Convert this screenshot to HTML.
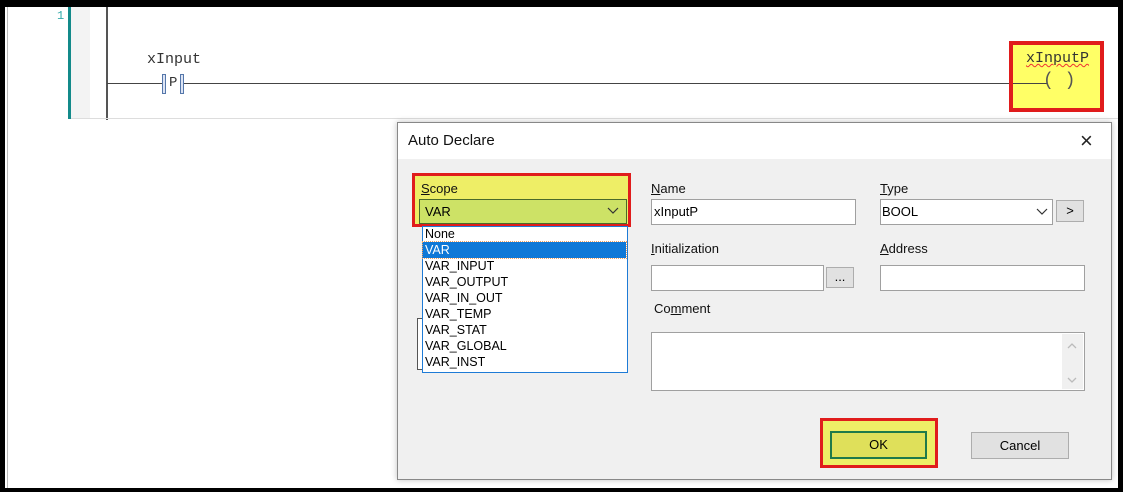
<!DOCTYPE html>
<html><head><meta charset="utf-8"><style>
*{margin:0;padding:0;box-sizing:border-box}
body{width:1123px;height:492px;background:#000;position:relative;overflow:hidden;font-family:"Liberation Sans",sans-serif}
.a{position:absolute}
.mono{font-family:"Liberation Mono",monospace;font-size:15px;color:#333}
.lbl{font-size:13px;color:#111}
.inp{background:#fff;border:1px solid #a0a0a0}
.btn{background:#e1e1e1;border:1px solid #adadad;font-size:13px;text-align:center}
.li{position:absolute;left:1px;width:203px;height:16px;font-size:12.5px;line-height:16px;padding-left:2px;color:#000}
</style></head><body>
<div class="a" style="left:5px;top:7px;width:1113px;height:481px;background:#fff"></div>
<div class="a" style="left:7px;top:7px;width:1px;height:481px;background:#bbb"></div>
<div class="a" style="left:68px;top:7px;width:3px;height:112px;background:#138a8a"></div>
<div class="a" style="left:71px;top:7px;width:19px;height:112px;background:#f3f3f3"></div>
<div class="a mono" style="left:57px;top:9px;color:#3aa;font-size:12px">1</div>
<div class="a" style="left:106px;top:7px;width:2px;height:113px;background:#555"></div>
<div class="a" style="left:71px;top:118px;width:1047px;height:1px;background:#ddd"></div>
<div class="a" style="left:107px;top:83px;width:940px;height:1px;background:#444"></div>
<div class="a mono" style="left:147px;top:51px">xInput</div>
<div class="a" style="left:162px;top:74px;width:4px;height:20px;border:1px solid #5577aa;background:#dde4f4"></div>
<div class="a" style="left:180px;top:74px;width:4px;height:20px;border:1px solid #5577aa;background:#dde4f4"></div>
<div class="a" style="left:166px;top:74px;width:14px;height:20px;background:#fff"></div>
<div class="a mono" style="left:169px;top:75px;font-size:14px">P</div>
<div class="a" style="left:1009px;top:41px;width:95px;height:71px;background:#ffff66;border:4px solid #e01c1c"></div>
<div class="a mono" style="left:1026px;top:50px;text-decoration:underline wavy #e33;text-decoration-thickness:1px">xInputP</div>
<div class="a" style="left:1013px;top:83px;width:34px;height:1px;background:#444"></div>
<div class="a mono" style="left:1043px;top:71px;font-size:18px;color:#555">( )</div>
<div class="a" style="left:397px;top:122px;width:715px;height:358px;background:#f0f0f0;border:1px solid #888;box-shadow:0 0 6px rgba(0,0,0,.25)"></div>
<div class="a" style="left:398px;top:123px;width:713px;height:36px;background:#fff"></div>
<div class="a" style="left:408px;top:132px;font-size:15px;color:#111">Auto Declare</div>
<div class="a" style="left:1080px;top:128px;font-size:22px;color:#222;font-weight:300">×</div>
<div class="a" style="left:412px;top:173px;width:219px;height:54px;background:#eeee66;border:3px solid #e01c1c"></div>
<div class="a lbl" style="left:421px;top:181px"><u>S</u>cope</div>
<div class="a" style="left:419px;top:199px;width:208px;height:25px;background:#cde266;border:1px solid #4a6a2a"></div>
<div class="a" style="left:425px;top:204px;font-size:13px">VAR</div>
<svg class="a" style="left:607px;top:207px" width="12" height="8"><path d="M1 1 L6 6 L11 1" fill="none" stroke="#333" stroke-width="1.2"/></svg>
<div class="a" style="left:417px;top:318px;width:10px;height:52px;border:1px solid #555;border-right:none;background:#fff"></div>
<div class="a" style="left:422px;top:226px;width:206px;height:147px;background:#fff;border:1px solid #1e7bd6"></div>
<div class="a" style="left:422px;top:226px;width:206px;height:147px">
<div class="li" style="top:0">None</div>
<div class="li" style="top:16px;background:#0f78d7;color:#fff;outline:1px dotted #f0a060">VAR</div>
<div class="li" style="top:32px">VAR_INPUT</div>
<div class="li" style="top:48px">VAR_OUTPUT</div>
<div class="li" style="top:64px">VAR_IN_OUT</div>
<div class="li" style="top:80px">VAR_TEMP</div>
<div class="li" style="top:96px">VAR_STAT</div>
<div class="li" style="top:112px">VAR_GLOBAL</div>
<div class="li" style="top:128px">VAR_INST</div>
</div>
<div class="a lbl" style="left:651px;top:181px"><u>N</u>ame</div>
<div class="a inp" style="left:651px;top:199px;width:205px;height:26px"></div>
<div class="a" style="left:654px;top:204px;font-size:13px">xInputP</div>
<div class="a lbl" style="left:880px;top:181px"><u>T</u>ype</div>
<div class="a inp" style="left:880px;top:199px;width:173px;height:26px"></div>
<div class="a" style="left:882px;top:204px;font-size:13px">BOOL</div>
<svg class="a" style="left:1036px;top:208px" width="12" height="8"><path d="M1 1 L6 6 L11 1" fill="none" stroke="#333" stroke-width="1.2"/></svg>
<div class="a btn" style="left:1056px;top:200px;width:28px;height:22px;line-height:20px">&gt;</div>
<div class="a lbl" style="left:651px;top:241px"><u>I</u>nitialization</div>
<div class="a inp" style="left:651px;top:265px;width:173px;height:26px"></div>
<div class="a btn" style="left:826px;top:267px;width:28px;height:21px;line-height:17px">...</div>
<div class="a lbl" style="left:880px;top:241px"><u>A</u>ddress</div>
<div class="a inp" style="left:880px;top:265px;width:205px;height:26px"></div>
<div class="a lbl" style="left:654px;top:301px">Co<u>m</u>ment</div>
<div class="a inp" style="left:651px;top:332px;width:434px;height:59px"></div>
<div class="a" style="left:1062px;top:334px;width:21px;height:55px;background:#f0f0f0"></div>
<svg class="a" style="left:1066px;top:341px" width="12" height="44"><path d="M2 7 L6 3 L10 7" fill="none" stroke="#bbb" stroke-width="1.3"/><path d="M2 37 L6 41 L10 37" fill="none" stroke="#bbb" stroke-width="1.3"/></svg>
<div class="a" style="left:820px;top:418px;width:118px;height:50px;background:#eeee66;border:3px solid #e01c1c"></div>
<div class="a" style="left:830px;top:431px;width:97px;height:28px;background:#dfe05a;border:2px solid #1f7a4a;font-size:13px;text-align:center;line-height:24px">OK</div>
<div class="a btn" style="left:971px;top:432px;width:98px;height:27px;line-height:25px">Cancel</div>
</body></html>
